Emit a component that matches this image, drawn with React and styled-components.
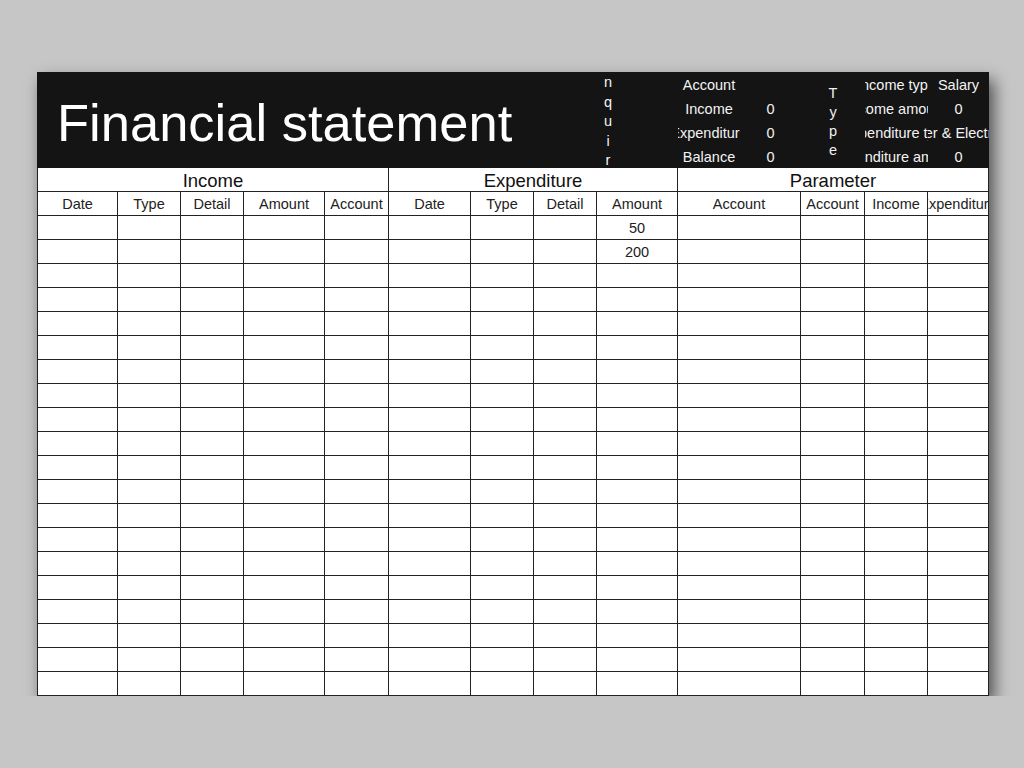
import React from "react";
import styled, { createGlobalStyle } from "styled-components";

const GlobalStyle = createGlobalStyle`
  body {
    margin: 0;
    background: #c6c6c6;
    font-family: "Liberation Sans", Arial, sans-serif;
  }
`;

const COLUMNS = "80px 63px 63px 81px 64px 82px 63px 63px 81px 123px 64px 63px 61px";

const StyledPage = styled.div`
  padding: 72px 0 0 37px;
`;

const StyledSheet = styled.div`
  width: 952px;
  background: #fff;
  box-shadow: 5px 8px 15px rgba(0, 0, 0, 0.6);
`;

const StyledHeader = styled.div`
  display: grid;
  grid-template-columns: 560px 81px 62px 61px 64px 63px 61px;
  grid-template-rows: repeat(4, 24px);
  grid-auto-flow: row dense;
  background: #141414;
  color: #f2f2f2;
  font-size: 14.5px;
`;

const StyledTitle = styled.h1`
  grid-column: 1;
  grid-row: 1 / span 4;
  margin: 0;
  padding: 4px 0 0 20px;
  display: flex;
  align-items: center;
  font-size: 52.5px;
  font-weight: normal;
  white-space: nowrap;
  color: #fff;
`;

const StyledVertical = styled.div`
  grid-column: ${({ $col }) => $col};
  grid-row: 1 / span 4;
  width: ${({ $width }) => $width || "100%"};
  justify-self: start;
  box-sizing: border-box;
  padding-top: 4px;
  display: flex;
  flex-direction: column;
  align-items: center;
  justify-content: center;
  overflow: hidden;
  line-height: ${({ $step }) => $step}px;

  span {
    display: block;
    flex-shrink: 0;
  }
`;

const StyledInfoCell = styled.div`
  display: flex;
  align-items: center;
  justify-content: center;
  padding-top: 2px;
  overflow: hidden;
  white-space: nowrap;

  span {
    flex-shrink: 0;
  }
`;

const StyledGrid = styled.div`
  display: grid;
  grid-template-columns: ${COLUMNS};
  grid-auto-rows: 24px;
  border-left: 1px solid #222;
  color: #222;
`;

const StyledGroupCell = styled.div`
  grid-column: span ${({ $span }) => $span};
  display: flex;
  align-items: center;
  justify-content: center;
  padding-top: 2px;
  border-right: 1px solid #222;
  border-bottom: 1px solid #222;
  font-size: 18.5px;
  color: #111;
`;

const StyledCell = styled.div`
  display: flex;
  align-items: center;
  justify-content: center;
  box-sizing: border-box;
  padding-top: 1px;
  border-right: 1px solid #222;
  border-bottom: 1px solid #222;
  font-size: 14.5px;
  overflow: hidden;
  white-space: nowrap;

  span {
    flex-shrink: 0;
  }
`;

const VerticalText = ({ text, step, width, col }) => (
  <StyledVertical $step={step} $width={width} $col={col}>
    {text.split("").map((letter, i) => (
      <span key={i}>{letter}</span>
    ))}
  </StyledVertical>
);

const InfoCell = ({ children }) => (
  <StyledInfoCell>
    <span>{children}</span>
  </StyledInfoCell>
);

// header summary: [label, value, parameter label, parameter value]
const summary = [
  ["Account", "", "Income type", "Salary"],
  ["Income", "0", "Income amount", "0"],
  ["Expenditure", "0", "Expenditure type", "Water & Electricity"],
  ["Balance", "0", "Expenditure amount", "0"],
];

const groups = [
  { title: "Income", span: 5 },
  { title: "Expenditure", span: 4 },
  { title: "Parameter", span: 4 },
];

const headings = [
  "Date",
  "Type",
  "Detail",
  "Amount",
  "Account",
  "Date",
  "Type",
  "Detail",
  "Amount",
  "Account",
  "Account",
  "Income",
  "Expenditure",
];

const data = { "0-8": "50", "1-8": "200" };

const App = () => (
  <>
    <GlobalStyle />
    <StyledPage>
      <StyledSheet>
        <StyledHeader>
          <StyledTitle>Financial statement</StyledTitle>
          <VerticalText text="Inquiry" step={19.5} width="22px" col={2} />
          <VerticalText text="Type" step={19} col={5} />
          {summary.map((row) =>
            row.map((text, i) => <InfoCell key={row[0] + i}>{text}</InfoCell>)
          )}
        </StyledHeader>
        <StyledGrid>
          {groups.map((g) => (
            <StyledGroupCell key={g.title} $span={g.span}>
              {g.title}
            </StyledGroupCell>
          ))}
          {headings.map((h, i) => (
            <StyledCell key={"h" + i}>
              <span>{h}</span>
            </StyledCell>
          ))}
          {Array.from({ length: 20 }).map((_, r) =>
            headings.map((_, c) => (
              <StyledCell key={r + "-" + c}>
                <span>{data[r + "-" + c]}</span>
              </StyledCell>
            ))
          )}
        </StyledGrid>
      </StyledSheet>
    </StyledPage>
  </>
);

export default App;
